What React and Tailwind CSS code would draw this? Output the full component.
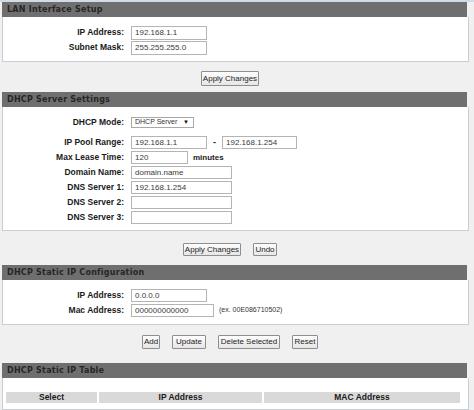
const labelFont = { fontFamily: '"Liberation Sans", Arial, sans-serif' }

function Header({ title }) {
  return (
    <div
      className="ml-[2px] w-[465px] h-[15px] bg-[#6f6f6f] pl-[5px] text-[8px] font-bold leading-[15px] text-[#262626] tracking-[0.25px]"
      style={{ fontFamily: '"DejaVu Sans", Verdana, sans-serif' }}
    >
      {title}
    </div>
  )
}

function Panel({ className = '', children }) {
  return (
    <div className={`ml-[2px] w-[467px] bg-white border border-t-0 border-[#c6ced6] ${className}`}>
      {children}
    </div>
  )
}

function Row({ label, children, className = 'h-[15px]' }) {
  return (
    <div className={`flex items-center ${className}`}>
      <div className="w-[121px] text-right text-[8.5px] font-bold text-[#1a1a1a]">{label}</div>
      <div className="ml-[7px] flex items-center">{children}</div>
    </div>
  )
}

function Input({ value = '', w, h = 'h-[13px]' }) {
  return (
    <div
      className={`${w} ${h} border border-[#b4b4b4] bg-white pl-[3px] text-[8px] text-[#3a3a3a] flex items-center`}
    >
      {value}
    </div>
  )
}

function Btn({ children, w, h = 'h-[14px]' }) {
  return (
    <div
      className={`${w} ${h} border border-[#8e8e8e] bg-gradient-to-b from-[#fdfdfd] to-[#e6e6e6] text-[8px] text-[#222] flex items-center justify-center rounded-[1px]`}
    >
      {children}
    </div>
  )
}

function ButtonRow({ className, children }) {
  return <div className={`w-[460px] flex justify-center gap-[12px] ${className}`}>{children}</div>
}

export default function App() {
  return (
    <div className="w-[474px] h-[410px] bg-[#f0f0f0] overflow-hidden" style={labelFont}>
      <div className="h-[2px] bg-[#d3dbe4]" />

      <Header title="LAN Interface Setup" />
      <Panel className="pt-[8px] pb-[6px]">
        <Row label="IP Address:">
          <Input value="192.168.1.1" w="w-[76px]" h="h-[14px]" />
        </Row>
        <Row label="Subnet Mask:">
          <Input value="255.255.255.0" w="w-[76px]" h="h-[14px]" />
        </Row>
      </Panel>
      <ButtonRow className="pt-[9px] pb-[6px]">
        <Btn w="w-[58px]" h="h-[15px]">Apply Changes</Btn>
      </ButtonRow>

      <Header title="DHCP Server Settings" />
      <Panel className="pt-[8px] pb-[5px]">
        <Row label="DHCP Mode:" className="h-[15px] mb-[5px]">
          <div className="w-[63px] h-[11px] border border-[#a8a8a8] bg-white flex items-center justify-between pl-[3px] pr-[4px] text-[7px] text-[#333]">
            <span>DHCP Server</span>
            <span className="text-[6px] text-[#111]">▼</span>
          </div>
        </Row>
        <Row label="IP Pool Range:">
          <Input value="192.168.1.1" w="w-[76px]" />
          <span className="w-[15px] text-center text-[9px] font-bold text-[#222]">-</span>
          <Input value="192.168.1.254" w="w-[75px]" />
        </Row>
        <Row label="Max Lease Time:">
          <Input value="120" w="w-[57px]" />
          <span className="ml-[5px] text-[8px] font-bold text-[#222]">minutes</span>
        </Row>
        <Row label="Domain Name:">
          <Input value="domain.name" w="w-[101px]" />
        </Row>
        <Row label="DNS Server 1:">
          <Input value="192.168.1.254" w="w-[101px]" />
        </Row>
        <Row label="DNS Server 2:">
          <Input w="w-[101px]" />
        </Row>
        <Row label="DNS Server 3:">
          <Input w="w-[101px]" />
        </Row>
      </Panel>
      <ButtonRow className="pt-[12px] pb-[9px]">
        <Btn w="w-[58px]" h="h-[13px]">Apply Changes</Btn>
        <Btn w="w-[24px]" h="h-[13px]">Undo</Btn>
      </ButtonRow>

      <Header title="DHCP Static IP Configuration" />
      <Panel className="pt-[8px] pb-[6px]">
        <Row label="IP Address:">
          <Input value="0.0.0.0" w="w-[76px]" />
        </Row>
        <Row label="Mac Address:">
          <Input value="000000000000" w="w-[83px]" />
          <span className="ml-[5px] text-[7px] text-[#333]">(ex. 00E086710502)</span>
        </Row>
      </Panel>
      <ButtonRow className="pt-[10px] pb-[14px]">
        <Btn w="w-[18px]">Add</Btn>
        <Btn w="w-[34px]">Update</Btn>
        <Btn w="w-[62px]">Delete Selected</Btn>
        <Btn w="w-[26px]">Reset</Btn>
      </ButtonRow>

      <Header title="DHCP Static IP Table" />
      <Panel className="pt-[14px] pb-[6px] pl-[3px]">
        <div className="flex gap-[2px] text-[8.5px] font-bold text-[#1a1a1a]">
          <div className="w-[91px] h-[11px] bg-[#d9d9d9] flex items-center justify-center">Select</div>
          <div className="w-[163px] h-[11px] bg-[#d9d9d9] flex items-center justify-center">IP Address</div>
          <div className="w-[196px] h-[11px] bg-[#d9d9d9] flex items-center justify-center">MAC Address</div>
        </div>
      </Panel>
    </div>
  )
}
